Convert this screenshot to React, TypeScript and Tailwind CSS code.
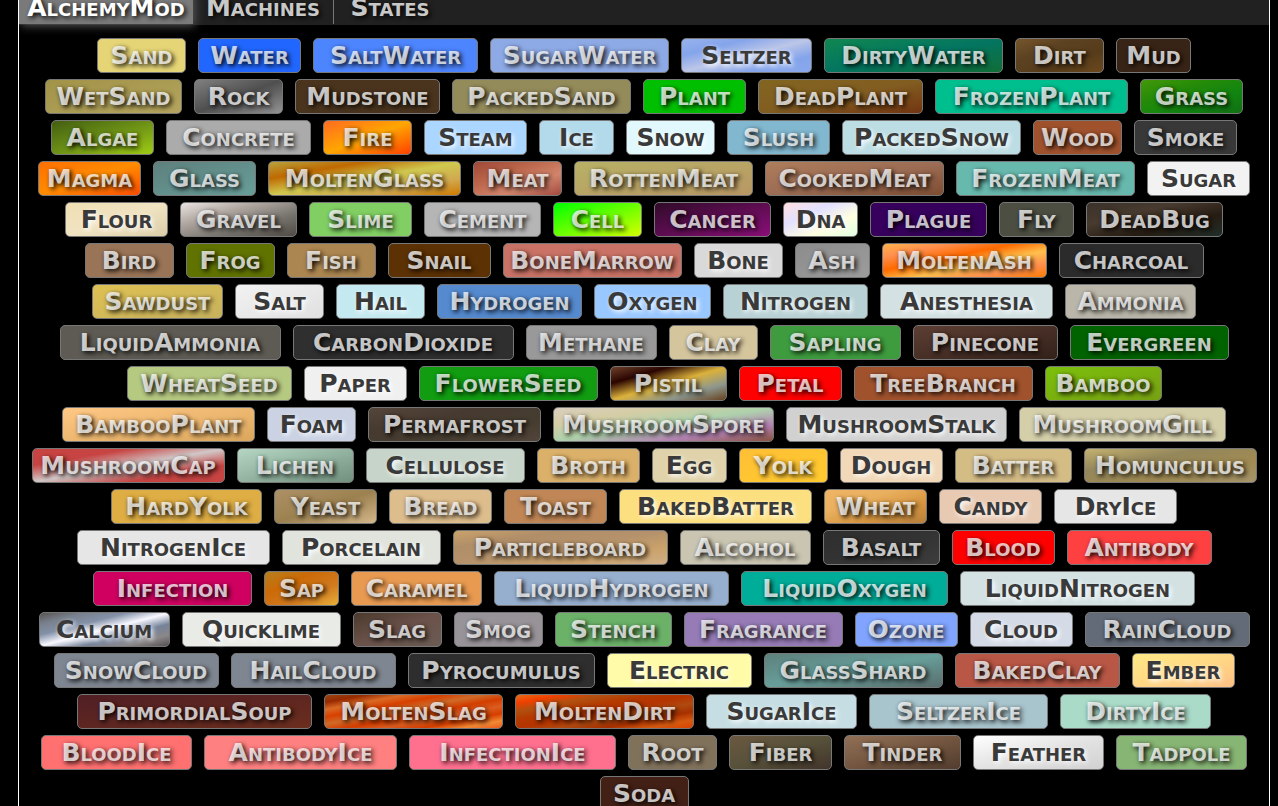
import { useState } from "react";
import clsx from "clsx";

type Item = { name: string; bg: string; dark?: boolean };

const categories = ["AlchemyMod", "Machines", "States"];

// dark: the label is dark on a pale button
const elements: Item[] = [
  { name: "Sand", bg: "bg-[#e6d577]" },
  { name: "Water", bg: "bg-[#2167ff]" },
  { name: "SaltWater", bg: "bg-[#4d85ff]" },
  { name: "SugarWater", bg: "bg-[#8eaae6]" },
  { name: "Seltzer", bg: "bg-[linear-gradient(to_bottom_right,#98b2ec,#84a4eb,#bcc6e8,#84a4eb,#8aa8ec)]", dark: true },
  { name: "DirtyWater", bg: "bg-[linear-gradient(to_bottom_right,#0f8750,#037561,#106e37)]" },
  { name: "Dirt", bg: "bg-[linear-gradient(to_bottom_right,#76552b,#5c4221,#573c1a,#6b481e)]" },
  { name: "Mud", bg: "bg-[#382417]" },
  { name: "WetSand", bg: "bg-[linear-gradient(to_bottom_right,#a19348,#b5a55e)]" },
  { name: "Rock", bg: "bg-[linear-gradient(to_bottom_right,#808080,#4f4f4f,#949494)]" },
  { name: "Mudstone", bg: "bg-[#4a341e]" },
  { name: "PackedSand", bg: "bg-[#948b5b]" },
  { name: "Plant", bg: "bg-[#00bf00]" },
  { name: "DeadPlant", bg: "bg-[linear-gradient(to_bottom_right,#826521,#825d21,#733511)]" },
  { name: "FrozenPlant", bg: "bg-[#00bf8f]" },
  { name: "Grass", bg: "bg-[linear-gradient(to_bottom_right,#439809,#258b08,#118511,#127013)]" },
  { name: "Algae", bg: "bg-[linear-gradient(to_bottom_right,#435e11,#6d9116,#9fcc14)]" },
  { name: "Concrete", bg: "bg-[#ababab]" },
  { name: "Fire", bg: "bg-[linear-gradient(to_bottom_right,#ff6b21,#ffa600,#ff4000)]" },
  { name: "Steam", bg: "bg-[#abd6ff]", dark: true },
  { name: "Ice", bg: "bg-[#b2daeb]", dark: true },
  { name: "Snow", bg: "bg-[#e1f8fc]", dark: true },
  { name: "Slush", bg: "bg-[#81b7cf]" },
  { name: "PackedSnow", bg: "bg-[#bcdde3]", dark: true },
  { name: "Wood", bg: "bg-[#a0522d]" },
  { name: "Smoke", bg: "bg-[#383838]" },
  { name: "Magma", bg: "bg-[linear-gradient(to_bottom_right,#ff6f00,#ff8c00,#ff4d00)]" },
  { name: "Glass", bg: "bg-[linear-gradient(to_bottom_right,#5e807d,#679e99)]" },
  { name: "MoltenGlass", bg: "bg-[linear-gradient(to_bottom_right,#b8a23c,#bf6900,#cfc84f,#d1a94f,#cf7a00)]" },
  { name: "Meat", bg: "bg-[linear-gradient(to_bottom_right,#9e4839,#ba6449,#d2856c,#a14940)]" },
  { name: "RottenMeat", bg: "bg-[linear-gradient(to_bottom_right,#b8b165,#b89765)]" },
  { name: "CookedMeat", bg: "bg-[linear-gradient(to_bottom_right,#ae7d5b,#9c6c54,#7e4d31)]" },
  { name: "FrozenMeat", bg: "bg-[#67b8ad]" },
  { name: "Sugar", bg: "bg-[#f2f2f2]", dark: true },
  { name: "Flour", bg: "bg-[linear-gradient(to_bottom_right,#f0dfb3,#f0e3c2,#dbcda7)]", dark: true },
  { name: "Gravel", bg: "bg-[linear-gradient(to_bottom_right,#e9e3e0,#b0a6a0,#75736d,#524a44)]" },
  { name: "Slime", bg: "bg-[#81cf63]" },
  { name: "Cement", bg: "bg-[#b5b5b5]" },
  { name: "Cell", bg: "bg-[linear-gradient(to_bottom_right,#00ff00,#d4ff00)]" },
  { name: "Cancer", bg: "bg-[linear-gradient(to_bottom_right,#300b29,#8a0e78)]" },
  { name: "Dna", bg: "bg-[linear-gradient(to_bottom_right,#ffe0e0,#e2e0ff,#fffee0,#e0ffe1)]", dark: true },
  { name: "Plague", bg: "bg-[#36005c]" },
  { name: "Fly", bg: "bg-[#4c4e42]" },
  { name: "DeadBug", bg: "bg-[linear-gradient(to_bottom_right,#3b322b,#483a2e,#261c13,#202e28)]" },
  { name: "Bird", bg: "bg-[#997457]" },
  { name: "Frog", bg: "bg-[#607300]" },
  { name: "Fish", bg: "bg-[#ac8650]" },
  { name: "Snail", bg: "bg-[#5c3104]" },
  { name: "BoneMarrow", bg: "bg-[#c97265]" },
  { name: "Bone", bg: "bg-[#d9d9d9]", dark: true },
  { name: "Ash", bg: "bg-[linear-gradient(to_bottom_right,#8c8c8c,#9c9c9c)]" },
  { name: "MoltenAsh", bg: "bg-[linear-gradient(to_bottom_right,#ffb34d,#ff8f4d,#ff6a00,#ffc04d,#ff8f4d,#ff7b00)]" },
  { name: "Charcoal", bg: "bg-[#2b2b2b]" },
  { name: "Sawdust", bg: "bg-[linear-gradient(to_bottom_right,#dec153,#c7b15d)]" },
  { name: "Salt", bg: "bg-[linear-gradient(to_bottom_right,#f2f2f2,#e0e0e0)]", dark: true },
  { name: "Hail", bg: "bg-[#c5e9f0]", dark: true },
  { name: "Hydrogen", bg: "bg-[#558acf]" },
  { name: "Oxygen", bg: "bg-[#99c7ff]", dark: true },
  { name: "Nitrogen", bg: "bg-[#b8d1d4]", dark: true },
  { name: "Anesthesia", bg: "bg-[#d3e1e3]", dark: true },
  { name: "Ammonia", bg: "bg-[#bab6a9]" },
  { name: "LiquidAmmonia", bg: "bg-[#5e5b54]" },
  { name: "CarbonDioxide", bg: "bg-[#2f2f2f]" },
  { name: "Methane", bg: "bg-[#999999]" },
  { name: "Clay", bg: "bg-[#d4c59d]" },
  { name: "Sapling", bg: "bg-[#3e9c3e]" },
  { name: "Pinecone", bg: "bg-[linear-gradient(to_bottom_right,#5c3e33,#33211a)]" },
  { name: "Evergreen", bg: "bg-[#006300]" },
  { name: "WheatSeed", bg: "bg-[#b6c981]" },
  { name: "Paper", bg: "bg-[#f0f0f0]", dark: true },
  { name: "FlowerSeed", bg: "bg-[#119c11]" },
  { name: "Pistil", bg: "bg-[linear-gradient(to_bottom_right,#6e412a,#2a0500,#dbb13b,#8d978d,#66401f)]" },
  { name: "Petal", bg: "bg-[#ff0000]" },
  { name: "TreeBranch", bg: "bg-[#a0522d]" },
  { name: "Bamboo", bg: "bg-[linear-gradient(to_bottom_right,#7cc00c,#77a012)]" },
  { name: "BambooPlant", bg: "bg-[linear-gradient(to_bottom_right,#ffc885,#dba75c)]" },
  { name: "Foam", bg: "bg-[#cad2e3]", dark: true },
  { name: "Permafrost", bg: "bg-[linear-gradient(to_bottom_right,#54463a,#473a30,#453d30,#52443a)]" },
  { name: "MushroomSpore", bg: "bg-[linear-gradient(to_bottom_right,#d9cfc0,#d5cda5,#aed2ac,#b583b5,#8a523e)]" },
  { name: "MushroomStalk", bg: "bg-[#d1d1d1]", dark: true },
  { name: "MushroomGill", bg: "bg-[#d4cfa9]" },
  { name: "MushroomCap", bg: "bg-[linear-gradient(to_bottom_right,#c74442,#c74442,#d1c7c7,#c74442,#c74442)]" },
  { name: "Lichen", bg: "bg-[linear-gradient(to_bottom_right,#b5d6c3,#71917e)]" },
  { name: "Cellulose", bg: "bg-[#c7d4c9]", dark: true },
  { name: "Broth", bg: "bg-[#dbb069]" },
  { name: "Egg", bg: "bg-[#e0d3ab]", dark: true },
  { name: "Yolk", bg: "bg-[linear-gradient(to_bottom_right,#ffbf36,#ffcb2e)]" },
  { name: "Dough", bg: "bg-[#f0d8b9]", dark: true },
  { name: "Batter", bg: "bg-[#d4bc85]" },
  { name: "Homunculus", bg: "bg-[linear-gradient(to_bottom_right,#c4b270,#94875b,#a08a52,#a6966a)]" },
  { name: "HardYolk", bg: "bg-[#dead43]" },
  { name: "Yeast", bg: "bg-[linear-gradient(to_bottom_right,#ad9166,#9c8150,#d4b78a)]" },
  { name: "Bread", bg: "bg-[#debd8c]" },
  { name: "Toast", bg: "bg-[#c08655]" },
  { name: "BakedBatter", bg: "bg-[#fcdf7e]", dark: true },
  { name: "Wheat", bg: "bg-[linear-gradient(to_bottom_right,#f0b564,#e9b05f,#d79640,#b7803c)]" },
  { name: "Candy", bg: "bg-[#e8cab3]", dark: true },
  { name: "DryIce", bg: "bg-[#e6e6e6]", dark: true },
  { name: "NitrogenIce", bg: "bg-[#e6e6e6]", dark: true },
  { name: "Porcelain", bg: "bg-[#e1e4dd]", dark: true },
  { name: "Particleboard", bg: "bg-[linear-gradient(to_bottom_right,#cba26b,#b08e68,#b5926b,#cba26b,#cfae86)]" },
  { name: "Alcohol", bg: "bg-[#c9c5b1]" },
  { name: "Basalt", bg: "bg-[linear-gradient(to_bottom_right,#2e2e2e,#333333,#3d3d3d)]" },
  { name: "Blood", bg: "bg-[#ff0000]" },
  { name: "Antibody", bg: "bg-[#ff4040]" },
  { name: "Infection", bg: "bg-[#cf0060]" },
  { name: "Sap", bg: "bg-[linear-gradient(to_bottom_right,#b5801d,#cc6a07,#d17a1f,#e8b038)]" },
  { name: "Caramel", bg: "bg-[#e89a51]" },
  { name: "LiquidHydrogen", bg: "bg-[#97afcf]" },
  { name: "LiquidOxygen", bg: "bg-[#00ad99]" },
  { name: "LiquidNitrogen", bg: "bg-[#d3e1e3]", dark: true },
  { name: "Calcium", bg: "bg-[linear-gradient(to_bottom_right,#585350,#78808c,#8391a8,#f8f8ff,#75839a,#8b8789,#55504e)]", dark: true },
  { name: "Quicklime", bg: "bg-[#e9ebe7]", dark: true },
  { name: "Slag", bg: "bg-[linear-gradient(to_bottom_right,#4b3a2d,#6b524a,#6a5c53)]" },
  { name: "Smog", bg: "bg-[#989398]" },
  { name: "Stench", bg: "bg-[#6bb168]" },
  { name: "Fragrance", bg: "bg-[#967bb6]" },
  { name: "Ozone", bg: "bg-[#80a4ff]" },
  { name: "Cloud", bg: "bg-[#d5dbe6]", dark: true },
  { name: "RainCloud", bg: "bg-[#636b78]" },
  { name: "SnowCloud", bg: "bg-[#7e8691]" },
  { name: "HailCloud", bg: "bg-[#7e8691]" },
  { name: "Pyrocumulus", bg: "bg-[#2e2e2e]" },
  { name: "Electric", bg: "bg-[#fffba8]", dark: true },
  { name: "GlassShard", bg: "bg-[linear-gradient(to_bottom_right,#5e807d,#679e99,#596e6e)]" },
  { name: "BakedClay", bg: "bg-[#b85746]" },
  { name: "Ember", bg: "bg-[linear-gradient(to_bottom_right,#ffe985,#ffd885,#ffc085)]", dark: true },
  { name: "PrimordialSoup", bg: "bg-[linear-gradient(to_bottom_right,#501e24,#6b2e1e)]" },
  { name: "MoltenSlag", bg: "bg-[linear-gradient(to_bottom_right,#9c4415,#962a00,#d96a26,#d84000,#cf6a28,#d43d00,#db5d20,#d63e00,#f28a35,#eb5a1c)]" },
  { name: "MoltenDirt", bg: "bg-[linear-gradient(to_bottom_right,#ed6b15,#f04000,#b05010,#b53a00,#b53400,#b04a10,#a83000,#d65a10,#db4200)]" },
  { name: "SugarIce", bg: "bg-[#c6dee3]", dark: true },
  { name: "SeltzerIce", bg: "bg-[#a8c4cc]" },
  { name: "DirtyIce", bg: "bg-[#aadbc9]" },
  { name: "BloodIce", bg: "bg-[#ff7070]" },
  { name: "AntibodyIce", bg: "bg-[#ff8080]" },
  { name: "InfectionIce", bg: "bg-[#ff708f]" },
  { name: "Root", bg: "bg-[#80715b]" },
  { name: "Fiber", bg: "bg-[linear-gradient(to_bottom_right,#6b5840,#57513a,#42342b)]" },
  { name: "Tinder", bg: "bg-[linear-gradient(to_bottom_right,#917056,#735640,#523c2e)]" },
  { name: "Feather", bg: "bg-[linear-gradient(to_bottom_right,#ffffff,#e3e3e3,#d1d1d1)]", dark: true },
  { name: "Tadpole", bg: "bg-[#87b574]" },
  { name: "Soda", bg: "bg-[#422016]" },
];

// every capital takes a 20px cell, every small capital a 14px one
function labelWidth(name: string) {
  const caps = name.replace(/[^A-Z]/g, "").length;
  return caps * 20 + (name.length - caps) * 14;
}

export default function App() {
  const [category, setCategory] = useState("AlchemyMod");
  const [selected, setSelected] = useState("");

  return (
    <div className="min-h-screen bg-black pr-2 pl-[18px] font-['DejaVu_Sans',sans-serif] text-[25px] font-bold [font-variant:small-caps]">
      <div className="min-h-screen overflow-hidden border-x border-white">
        <nav className="-mt-2 flex h-[33px] bg-[#212121] pb-px">
          {categories.map((c) => (
            <button
              key={c}
              style={{ width: labelWidth(c) + 22 }}
              className={clsx(
                "box-content flex items-center justify-center leading-8 [text-shadow:2px_2px_5px_#000]",
                c === category ? "bg-[#7a7a7a] text-white shadow-[2px_2px_10px_#555]" : "text-[#c8c8c8]",
                c === "Machines" && "border-r border-[#777]"
              )}
              onClick={() => setCategory(c)}
            >
              {c}
            </button>
          ))}
        </nav>
        <main className="flex flex-wrap justify-center gap-x-3 gap-y-1.5 px-1.5 pt-[13px]">
          {elements.map((el) => (
            <button
              key={el.name}
              style={{ width: labelWidth(el.name) + 27 }}
              className={clsx(
                "flex h-[35px] items-center justify-center rounded-[5px] border leading-8",
                el.bg,
                el.dark
                  ? "text-[#3a3a3a] [text-shadow:2px_2px_5px_#fff]"
                  : "text-white/75 [text-shadow:2px_2px_5px_#000]",
                el.name === selected ? "border-white" : "border-[#777]"
              )}
              onClick={() => setSelected(el.name)}
            >
              {el.name}
            </button>
          ))}
        </main>
      </div>
    </div>
  );
}
